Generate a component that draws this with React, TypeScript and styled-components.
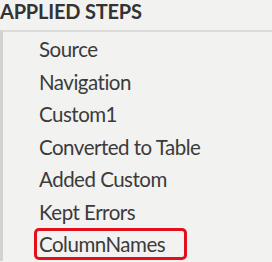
import styled, { createGlobalStyle } from "styled-components";

const GlobalStyle = createGlobalStyle`
  html, body {
    margin: 0;
    padding: 0;
    background: #f2f2f1;
  }
`;

const Pane = styled.div`
  width: 272px;
  height: 262px;
  overflow: hidden;
  background: #f2f2f1;
  font-family: Lato, "Open Sans", sans-serif;
`;

const Heading = styled.h2`
  margin: 0;
  padding: 0;
  height: 30px;
  font-size: 20px;
  line-height: 22px;
  font-weight: 700;
  color: #333333;
  letter-spacing: -0.2px;
`;

const StepList = styled.ul`
  list-style: none;
  margin: 0;
  padding: 1px 0 0 0;
  border-top: 2px solid #dadad9;
  border-left: 3px solid #d2d2d1;
  display: flex;
  flex-direction: column;
`;

const Step = styled.li`
  height: 32.5px;
  display: flex;
  align-items: center;
  padding-left: 31px;
`;

const Label = styled.span<{ $selected?: boolean }>`
  display: inline-block;
  font-size: 20.5px;
  line-height: 26px;
  letter-spacing: -0.5px;
  color: #3b3b3b;
  padding: 0 19px 0 2px;
  border: 3px solid ${(p) => (p.$selected ? "#e3101c" : "transparent")};
  border-radius: 5px;
`;

const steps = [
  "Source",
  "Navigation",
  "Custom1",
  "Converted to Table",
  "Added Custom",
  "Kept Errors",
  "ColumnNames",
];

export default function App() {
  return (
    <Pane>
      <GlobalStyle />
      <Heading>APPLIED STEPS</Heading>
      <StepList>
        {steps.map((s, i) => (
          <Step key={s}>
            <Label $selected={i === steps.length - 1}>{s}</Label>
          </Step>
        ))}
      </StepList>
    </Pane>
  );
}
